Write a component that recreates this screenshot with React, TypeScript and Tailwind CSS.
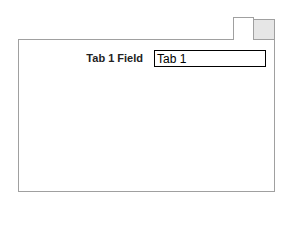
export default function App() {
  return (
    <div className="h-[225px] w-[300px] bg-white pl-[18px] pt-[17px] font-['Liberation_Sans',Arial,sans-serif]">
      <div className="relative z-10 -mb-px flex w-[257px] items-end justify-end">
        <div className="h-[23px] w-[21px] border-x border-t border-[#a0a0a0] bg-white" />
        <div className="h-[21px] w-[21px] border-y border-r border-[#a0a0a0] bg-[#e6e6e6]" />
      </div>
      <div className="h-[153px] w-[257px] border border-[#a0a0a0] bg-white pt-[10px]">
        <div className="flex items-center">
          <label className="w-[124px] text-right text-[11px] font-bold text-[#222]">Tab 1 Field</label>
          <div className="ml-[11px] flex h-[17px] w-[112px] items-center border border-black px-[2px] text-[12px] leading-none text-black">
            Tab 1
          </div>
        </div>
      </div>
    </div>
  );
}
